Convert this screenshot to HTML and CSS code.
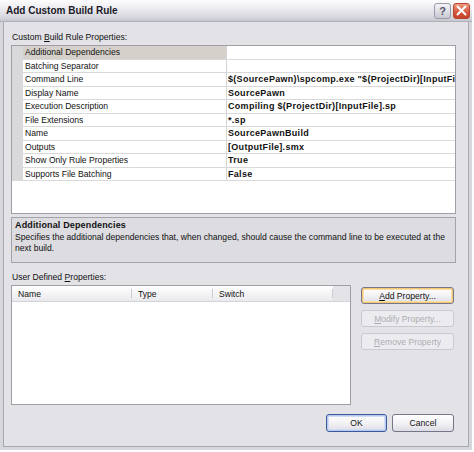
FILE: index.html
```html
<!DOCTYPE html>
<html>
<head>
<meta charset="utf-8">
<title>Add Custom Build Rule</title>
<link rel="stylesheet" href="styles.css">
</head>
<body>
<div class="window">
  <div class="titlebar">
    <span class="title">Add Custom Build Rule</span>
    <div class="tb-buttons">
      <span class="tb-btn help">?</span>
      <span class="tb-btn close"><svg width="11" height="11" viewBox="0 0 11 11"><path d="M1.5 1.5 L9.5 9.5 M9.5 1.5 L1.5 9.5" stroke="#fff" stroke-width="2" stroke-linecap="round"/></svg></span>
    </div>
  </div>
  <div class="client">
    <div class="label">Custom <u>B</u>uild Rule Properties:</div>
    <div class="grid">
      <div class="rows">
        <div class="row selected"><div class="name">Additional Dependencies</div><div class="val"></div></div>
        <div class="row"><div class="name">Batching Separator</div><div class="val"></div></div>
        <div class="row"><div class="name">Command Line</div><div class="val">$(SourcePawn)\spcomp.exe "$(ProjectDir)[InputFile].sp" -o"$(ProjectDir)[OutputFile].smx"</div></div>
        <div class="row"><div class="name">Display Name</div><div class="val">SourcePawn</div></div>
        <div class="row"><div class="name">Execution Description</div><div class="val">Compiling $(ProjectDir)[InputFile].sp</div></div>
        <div class="row"><div class="name">File Extensions</div><div class="val">*.sp</div></div>
        <div class="row"><div class="name">Name</div><div class="val">SourcePawnBuild</div></div>
        <div class="row"><div class="name">Outputs</div><div class="val">[OutputFile].smx</div></div>
        <div class="row"><div class="name">Show Only Rule Properties</div><div class="val">True</div></div>
        <div class="row"><div class="name">Supports File Batching</div><div class="val">False</div></div>
      </div>
    </div>
    <div class="desc">
      <div class="desc-title">Additional Dependencies</div>
      <div class="desc-text">Specifies the additional dependencies that, when changed, should cause the command line to be executed at the<br>next build.</div>
    </div>
    <div class="label label-user">User Defined <u>P</u>roperties:</div>
    <div class="lower">
      <div class="list">
        <div class="lv-head">
          <div class="col col-name">Name</div>
          <div class="col col-type">Type</div>
          <div class="col col-switch">Switch</div>
          <div class="col-fill"></div>
        </div>
      </div>
      <div class="side-buttons">
        <button class="btn btn-hot"><u>A</u>dd Property...</button>
        <button class="btn" disabled><u>M</u>odify Property...</button>
        <button class="btn" disabled><u>R</u>emove Property</button>
      </div>
    </div>
    <div class="footer">
      <button class="btn btn-default">OK</button>
      <button class="btn btn-cancel">Cancel</button>
    </div>
  </div>
</div>
</body>
</html>
```
FILE: styles.css
```css
* { box-sizing: border-box; }
html, body { margin: 0; padding: 0; background: #ffffff; }
body {
  font-family: "Liberation Sans", Arial, sans-serif;
  font-size: 8.6px;
  color: #111111;
}
.window {
  width: 472px;
  height: 450px;
  display: flex;
  flex-direction: column;
  background: #d6d6dd;
}
.titlebar {
  height: 22px;
  flex: none;
  display: flex;
  align-items: center;
  justify-content: space-between;
  padding: 0 2px 0 6px;
  background: linear-gradient(#fdfdfe 0%, #eeeef2 35%, #d8d8df 80%, #c6c6ce 100%);
  border-bottom: 1px solid #b0b0b9;
}
.title {
  font-weight: bold;
  font-size: 10px;
  color: #1b1b28;
}
.tb-buttons { display: flex; gap: 2px; }
.tb-btn {
  width: 17px;
  height: 16px;
  border-radius: 3px;
  display: flex;
  align-items: center;
  justify-content: center;
}
.help {
  background: linear-gradient(#f4f4f7, #c9c9d4);
  border: 1px solid #9a9aa8;
  color: #55556a;
  font-weight: bold;
  font-size: 11px;
}
.close {
  background: linear-gradient(#f09a80, #d4553b 60%, #c2402a);
  border: 1px solid #b84630;
}
.client {
  flex: 1;
  margin: 0 3px 3px 3px;
  background: #e2e2e7;
  border: 1px solid #a9a9b2;
  border-top: 0;
  padding: 10px 12px 0 7px;
  display: flex;
  flex-direction: column;
}
.label {
  line-height: 11px;
  height: 11px;
  margin-bottom: 2px;
  padding-left: 1px;
}
.grid {
  height: 169px;
  background: #ffffff;
  border: 1px solid #9f9fa8;
  overflow: hidden;
}
.rows {
  border-left: 11px solid #d9d9dc;
}
.row {
  display: grid;
  grid-template-columns: 204px 1fr;
  height: 13.5px;
  line-height: 13px;
  border-bottom: 1px solid #d9d9d9;
}
.name {
  padding-left: 2px;
  border-right: 1px solid #d4d4d4;
  white-space: nowrap;
  overflow: hidden;
}
.selected .name { background: #d5d1ca; }
.val {
  padding-left: 1px;
  font-weight: bold;
  font-size: 9px;
  letter-spacing: 0.3px;
  white-space: nowrap;
  overflow: hidden;
}
.desc {
  margin-top: 3px;
  height: 46px;
  background: #dcdce1;
  border: 1px solid #a3a3ab;
  padding: 1px 3px 0 3px;
}
.desc-title {
  font-weight: bold;
  font-size: 9px;
  letter-spacing: 0.15px;
  line-height: 13px;
}
.desc-text { line-height: 11px; }
.label-user { margin-top: 9px; }
.lower {
  display: flex;
  gap: 10px;
  height: 120px;
}
.list {
  width: 340px;
  height: 120px;
  background: #ffffff;
  border: 1px solid #9f9fa8;
}
.lv-head {
  display: flex;
  height: 16px;
  background: linear-gradient(#ffffff, #f3f3f5 60%, #e9e9ee);
  border-bottom: 1px solid #d3d3da;
}
.col {
  padding-left: 6px;
  border-right: 1px solid #c9c9cf;
  margin: 3px 0;
  line-height: 10px;
}
.col-name { width: 120px; }
.col-type { width: 81px; }
.col-switch { width: 120px; }
.col-fill { flex: 1; background: #e3e3e8; }
.side-buttons {
  display: flex;
  flex-direction: column;
  gap: 6px;
  padding-top: 2px;
}
.btn {
  font-family: "Liberation Sans", Arial, sans-serif;
  font-size: 8.6px;
  color: #111111;
  height: 17px;
  width: 93px;
  padding: 0;
  border: 1px solid #76768a;
  border-radius: 3px;
  background: linear-gradient(#ffffff, #f3f3f6 50%, #dcdce4);
}
.btn-hot {
  box-shadow: inset 0 0 0 1px #f3c776, inset 0 0 0 2px #fbe0a8;
}
.btn:disabled {
  color: #acacb0;
  border-color: #c9c9cf;
  background: #ececf0;
}
.footer {
  display: flex;
  justify-content: flex-end;
  gap: 5px;
  margin-top: 9px;
  padding-right: 2px;
}
.btn-default {
  width: 61px;
  height: 18px;
  box-shadow: inset 0 0 0 1px #b6c9ee, inset 0 0 0 2px #d2dcf4;
  border-color: #3c5a9a;
}
.btn-cancel { width: 62px; height: 18px; }
```
